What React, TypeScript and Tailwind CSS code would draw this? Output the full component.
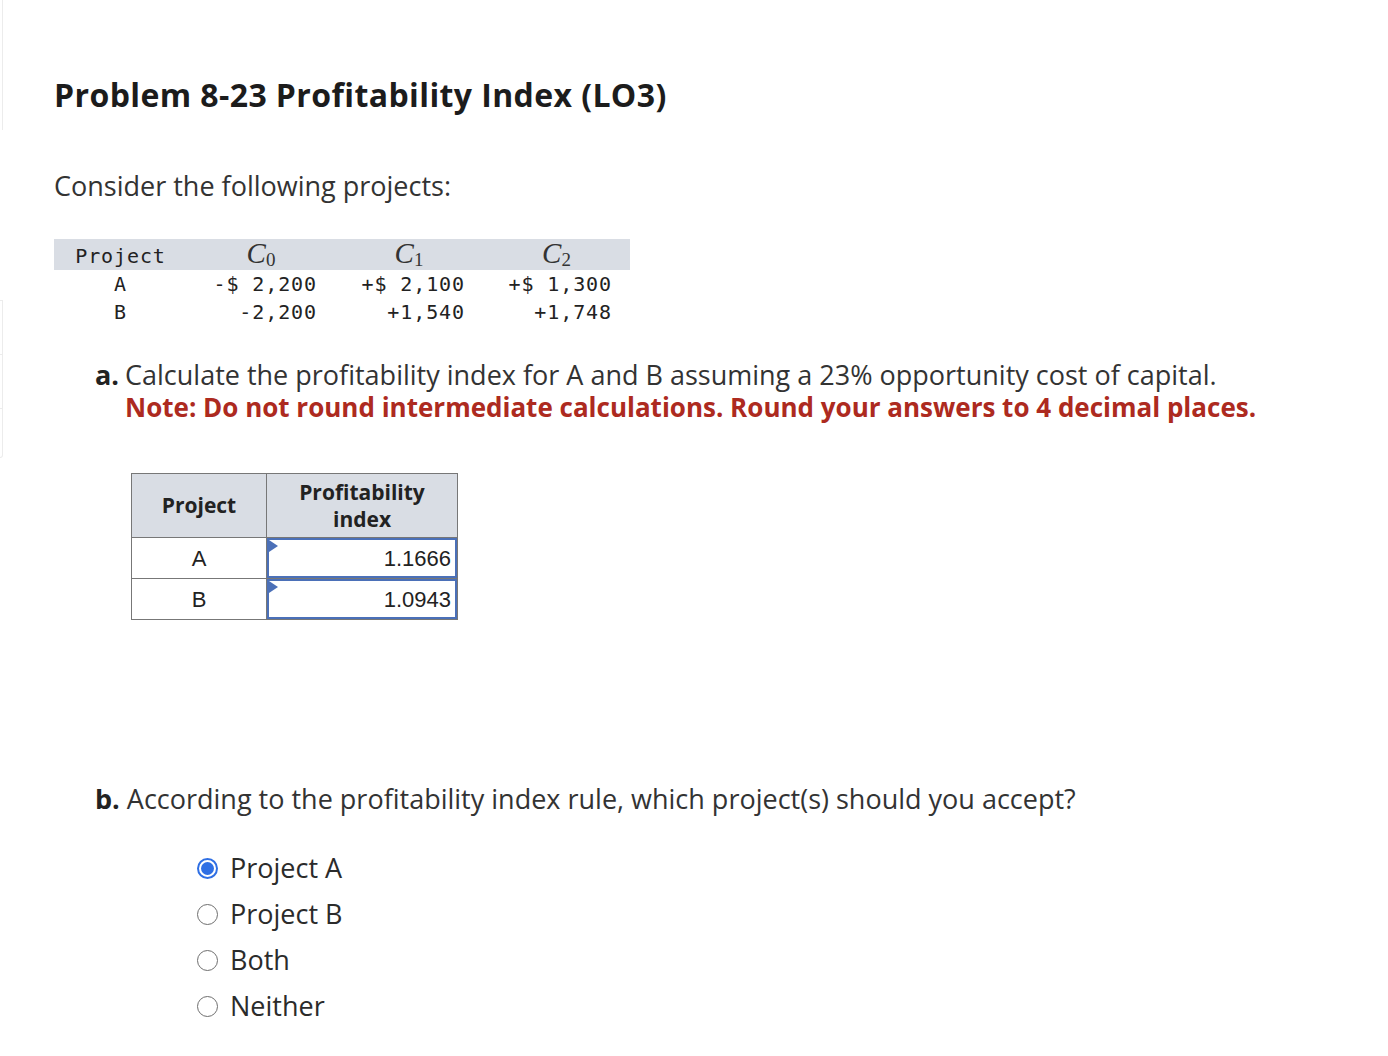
import { useState } from "react";

const sans = "font-['Open_Sans','Lato',sans-serif] [font-variant-ligatures:none]";

function RadioDot({ checked }: { checked: boolean }) {
  return checked ? (
    <span className="w-[21px] h-[21px] rounded-full border-2 border-[#2f6fe4] bg-white flex items-center justify-center shrink-0">
      <span className="w-[13px] h-[13px] rounded-full bg-[#2f6fe4]" />
    </span>
  ) : (
    <span className="w-[21px] h-[21px] rounded-full border-[1.5px] border-[#6e6e6e] bg-white shrink-0" />
  );
}

function CHead({ n }: { n: string }) {
  return (
    <span className="font-['Liberation_Serif',serif] text-[#333] leading-none tracking-normal">
      <span className="italic text-[29px]">C</span>
      <span className="text-[19px] relative top-[3px]">{n}</span>
    </span>
  );
}

function InputCell({ value }: { value: string }) {
  return (
    <td className="border border-[#777] p-0 h-[41px]">
      <div className="relative h-full border-2 border-[#4b70b8] flex items-center justify-end pr-[4px] font-['Liberation_Sans',Arial,sans-serif] text-[22px] text-[#222]">
        <span className="absolute left-0 top-0 w-0 h-0 border-t-[6px] border-b-[6px] border-l-[9px] border-t-transparent border-b-transparent border-l-[#4b70b8]" />
        {value}
      </div>
    </td>
  );
}

export default function App() {
  const [choice, setChoice] = useState("Project A");
  const options = ["Project A", "Project B", "Both", "Neither"];

  return (
    <div className={`flex bg-white min-h-[1056px] ${sans}`}>
      {/* faint frame remnants at left edge */}
      <div className="w-[3px] shrink-0 flex flex-col">
        <div className="h-[130px] border-r border-[#ececec]" />
        <div className="h-[170px]" />
        <div className="h-[55px] border border-l-0 border-[#ececec]" />
        <div className="h-[53px] border-r border-[#ececec]" />
        <div className="h-[50px] border border-l-0 border-[#ececec] rounded-br" />
      </div>

      <div className="flex-1 pl-[51px] pt-[74px] text-[#2b2b2b]">
        <h1 className="text-[32px] font-bold text-[#1c1c1c] leading-[42px] tracking-[0.4px]">
          Problem 8-23 Profitability Index (LO3)
        </h1>

        <p className="mt-[53px] text-[27px] leading-[34px] text-[#333]">Consider the following projects:</p>

        <table className="mt-[36px] border-collapse font-['DejaVu_Sans_Mono','Liberation_Mono',monospace] text-[20px] leading-[28px] tracking-[0.9px] text-[#222]">
          <thead>
            <tr className="bg-[#d9dde4] h-[28px]">
              <th className="w-[133px] p-0 font-normal text-center align-bottom">Project</th>
              <th className="w-[148px] p-0 font-normal text-center"><CHead n="0" /></th>
              <th className="w-[148px] p-0 font-normal text-center"><CHead n="1" /></th>
              <th className="w-[147px] p-0 font-normal text-center"><CHead n="2" /></th>
            </tr>
          </thead>
          <tbody>
            <tr className="h-[28px]">
              <td className="p-0 text-center">A</td>
              <td className="p-0 text-right pr-[18px]">-$ 2,200</td>
              <td className="p-0 text-right pr-[18px]">+$ 2,100</td>
              <td className="p-0 text-right pr-[18px]">+$ 1,300</td>
            </tr>
            <tr className="h-[28px]">
              <td className="p-0 text-center">B</td>
              <td className="p-0 text-right pr-[18px]">-2,200</td>
              <td className="p-0 text-right pr-[18px]">+1,540</td>
              <td className="p-0 text-right pr-[18px]">+1,748</td>
            </tr>
          </tbody>
        </table>

        <div className="mt-[32px] ml-[41px] flex text-[27px] leading-[33px] text-[#333]">
          <span className="font-bold text-[#222] w-[30px] shrink-0">a.</span>
          <div>
            <p>Calculate the profitability index for A and B assuming a 23% opportunity cost of capital.</p>
            <p className="font-bold text-[26px] text-[#ad2a20]">
              Note: Do not round intermediate calculations. Round your answers to 4 decimal places.
            </p>
          </div>
        </div>

        <table className="mt-[49px] ml-[77px] border-collapse">
          <thead>
            <tr className="bg-[#d9dde4] h-[64px]">
              <th className="w-[135px] border border-[#777] text-[21px] font-bold text-[#222] leading-[27px]">Project</th>
              <th className="w-[191px] border border-[#777] text-[21px] font-bold text-[#222] leading-[27px]">
                <div>Profitability</div>
                <div>index</div>
              </th>
            </tr>
          </thead>
          <tbody>
            <tr>
              <td className="border border-[#777] text-center font-['Liberation_Sans',Arial,sans-serif] text-[22px] text-[#222]">A</td>
              <InputCell value="1.1666" />
            </tr>
            <tr>
              <td className="border border-[#777] text-center font-['Liberation_Sans',Arial,sans-serif] text-[22px] text-[#222]">B</td>
              <InputCell value="1.0943" />
            </tr>
          </tbody>
        </table>

        <div className="mt-[162px] ml-[41px] text-[27px] leading-[34px] text-[#333]">
          <span className="font-bold text-[#222]">b.</span> According to the profitability index rule, which project(s) should you accept?
        </div>

        <div className="mt-[35px] ml-[143px] flex flex-col gap-[12px]">
          {options.map((o) => (
            <label
              key={o}
              className="flex items-center gap-[12px] text-[27px] leading-[34px] text-[#2b2b2b] cursor-pointer"
              onClick={() => setChoice(o)}
            >
              <RadioDot checked={choice === o} />
              <span>{o}</span>
            </label>
          ))}
        </div>
      </div>
    </div>
  );
}
